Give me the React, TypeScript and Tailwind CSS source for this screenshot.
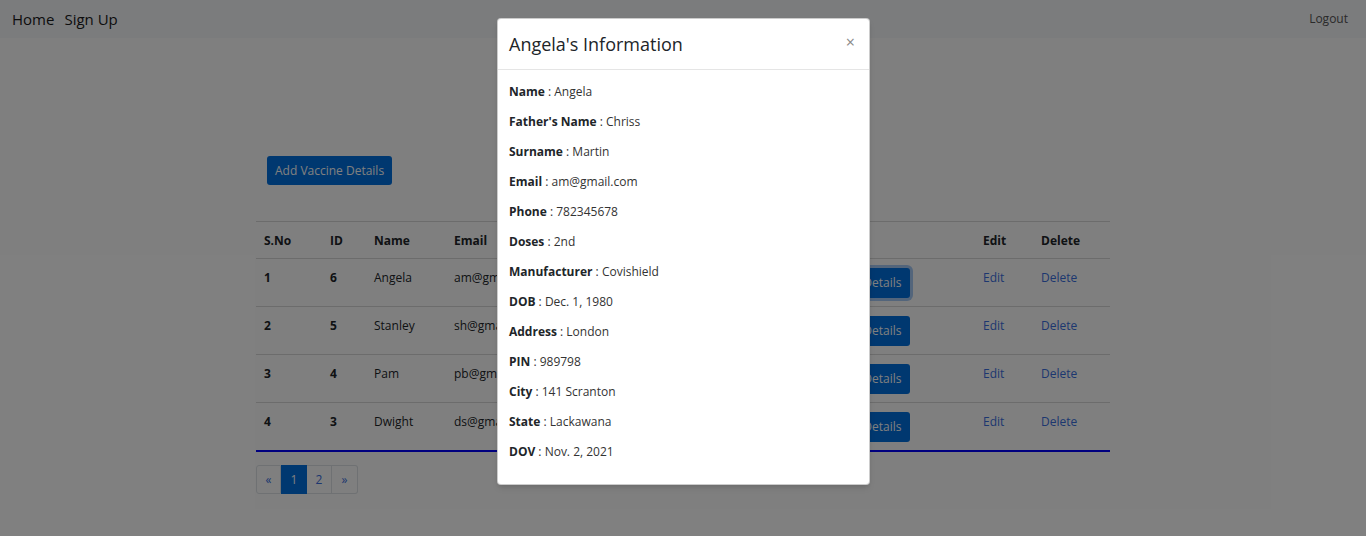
import React from 'react';

const rows = [
  { sno: 1, id: 6, name: 'Angela', email: 'am@gmail.com', phone: '782345678' },
  { sno: 2, id: 5, name: 'Stanley', email: 'sh@gmail.com', phone: '982345671' },
  { sno: 3, id: 4, name: 'Pam', email: 'pb@gmail.com', phone: '882345672' },
  { sno: 4, id: 3, name: 'Dwight', email: 'ds@gmail.com', phone: '682345673' },
];

const info: [string, string][] = [
  ['Name', 'Angela'],
  ["Father's Name", 'Chriss'],
  ['Surname', 'Martin'],
  ['Email', 'am@gmail.com'],
  ['Phone', '782345678'],
  ['Doses', '2nd'],
  ['Manufacturer', 'Covishield'],
  ['DOB', 'Dec. 1, 1980'],
  ['Address', 'London'],
  ['PIN', '989798'],
  ['City', '141 Scranton'],
  ['State', 'Lackawana'],
  ['DOV', 'Nov. 2, 2021'],
];

export default function App() {
  return (
    <div
      className="relative min-h-[536px] bg-white text-[#212529]"
      style={{ fontFamily: '"Open Sans", "Noto Sans", sans-serif' }}
    >
      {/* Navbar */}
      <nav className="flex h-[38px] items-center justify-between bg-[#f6f8fa] pl-3 pr-[18px]">
        <div className="flex items-center gap-[10px] text-[15px] text-[#1a1a1a]">
          <span>Home</span>
          <span>Sign Up</span>
        </div>
        <span className="text-[12px] text-[#555]">Logout</span>
      </nav>

      {/* Content */}
      <div className="mx-auto w-[854px] pt-[118px]">
        <div className="pl-[11px]">
          <button className="h-[29px] rounded-[3px] bg-[#0070e0] px-[8px] text-[12px] text-white">
            Add Vaccine Details
          </button>
        </div>

        <table className="mt-[36px] w-full border-collapse text-left text-[12px]">
          <thead>
            <tr className="border-t border-[#d8d8d8]">
              <th className="w-[66px] px-2 pb-[8px] pt-[10px] leading-[18px] font-bold">S.No</th>
              <th className="w-[44px] px-2 pb-[8px] pt-[10px] font-bold">ID</th>
              <th className="w-[80px] px-2 pb-[8px] pt-[10px] font-bold">Name</th>
              <th className="w-[194px] px-2 pb-[8px] pt-[10px] font-bold">Email</th>
              <th className="w-[178px] px-2 pb-[8px] pt-[10px] font-bold">Phone</th>
              <th className="w-[157px] px-2 pb-[8px] pt-[10px] font-bold">Details</th>
              <th className="w-[58px] px-2 pb-[8px] pt-[10px] font-bold">Edit</th>
              <th className="px-2 pb-[8px] pt-[10px] font-bold">Delete</th>
            </tr>
          </thead>
          <tbody>
            {rows.map((r, i) => (
              <tr
                key={r.id}
                className={
                  'border-t border-[#d8d8d8] align-top' +
                  (i === rows.length - 1 ? ' border-b-2 border-b-[#0000ff]' : '')
                }
              >
                <td className="px-2 pt-[10px] font-bold leading-[18px]">{r.sno}</td>
                <td className="px-2 pt-[10px] font-bold leading-[18px]">{r.id}</td>
                <td className="px-2 pt-[10px] leading-[18px]">{r.name}</td>
                <td className="px-2 pt-[10px] leading-[18px]">{r.email}</td>
                <td className="px-2 pt-[10px] leading-[18px]">{r.phone}</td>
                <td className="px-2 pb-[8px] pt-[9px] leading-[18px]">
                  <button
                    className={
                      'h-[30px] rounded-[3px] bg-[#0070e0] px-[8px] text-[12px] text-white' +
                      (i === 0 ? ' shadow-[0_0_0_3px_rgba(80,150,240,0.5)]' : '')
                    }
                  >
                    View Details
                  </button>
                </td>
                <td className="px-2 pt-[10px] leading-[18px] text-[#3a6fe0]">Edit</td>
                <td className="px-2 pt-[10px] leading-[18px] text-[#3a6fe0]">Delete</td>
              </tr>
            ))}
          </tbody>
        </table>

        {/* Pagination */}
        <div className="mt-[13px] flex h-[29px] w-fit text-[12px]">
          <span className="flex w-[25px] items-center justify-center rounded-l-[3px] border border-[#dee2e6] text-[#3a6fe0]">«</span>
          <span className="flex w-[26px] items-center justify-center border border-[#0070e0] bg-[#0070e0] text-white">1</span>
          <span className="flex w-[25px] items-center justify-center border border-l-0 border-[#dee2e6] text-[#3a6fe0]">2</span>
          <span className="flex w-[26px] items-center justify-center rounded-r-[3px] border border-l-0 border-[#dee2e6] text-[#3a6fe0]">»</span>
        </div>
      </div>

      {/* Backdrop */}
      <div className="absolute inset-0 bg-black/50" />

      {/* Modal */}
      <div className="absolute left-[497px] top-[18px] w-[373px] rounded-[4px] border border-black/20 bg-white shadow-md">
        <div className="flex h-[51px] items-center justify-between border-b border-[#e5e5e5] pl-[11px] pr-[14px]">
          <h5 className="text-[18px] leading-none text-[#212529]">Angela's Information</h5>
          <span className="mb-[5px] text-[16px] leading-none text-[#888]">×</span>
        </div>
        <div className="px-[11px] pb-[11px] pt-[13px] text-[12px] text-[#333]">
          {info.map(([k, v]) => (
            <p key={k} className="mb-[12px] leading-[18px]">
              <span className="font-bold text-[#212529]">{k}</span> : {v}
            </p>
          ))}
        </div>
      </div>
    </div>
  );
}
